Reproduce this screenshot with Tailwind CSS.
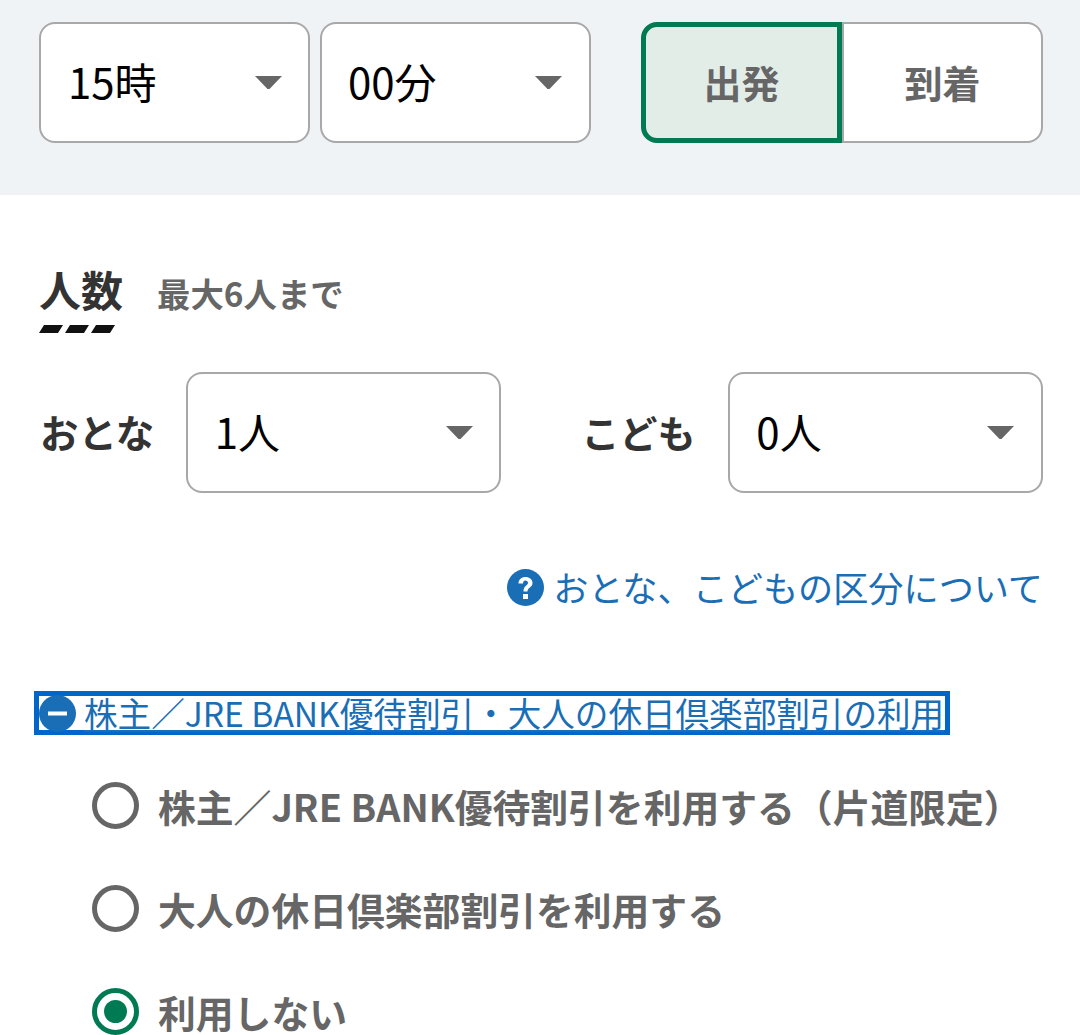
<!DOCTYPE html>
<html lang="ja">
  <head>
    <meta charset="UTF-8" />
    <script src="https://cdn.jsdelivr.net/npm/@tailwindcss/browser@4"></script>
    <title>人数</title>
  </head>
  <body class="w-[1080px] h-[1035px] overflow-hidden bg-white font-['Noto_Sans_CJK_JP','Noto_Sans',sans-serif]">
    <!-- date and time -->
    <section class="h-[195px] bg-[#eff3f6] pt-[22px] pl-[39px] pr-[37px] flex items-start">
      <div class="w-[271px] h-[121px] bg-white border-2 border-[#a8a8a8] rounded-[16px] flex items-center justify-between pl-[27px] pr-[26px]">
        <span class="text-[42px] leading-none text-black -translate-y-[2px]">15時</span>
        <svg width="27" height="13" viewBox="0 0 27 13"><path d="M0 0H27L14.5 13H12.5Z" fill="#666" /></svg>
      </div>
      <div class="ml-[10px] w-[271px] h-[121px] bg-white border-2 border-[#a8a8a8] rounded-[16px] flex items-center justify-between pl-[26px] pr-[27px]">
        <span class="text-[42px] leading-none text-black -translate-y-[2px]">00分</span>
        <svg width="27" height="13" viewBox="0 0 27 13"><path d="M0 0H27L14.5 13H12.5Z" fill="#666" /></svg>
      </div>
      <div class="ml-[50px] flex">
        <div class="w-[201px] h-[121px] bg-[#e3ede8] border-[5px] border-[#007a53] rounded-l-[16px] flex items-center justify-center text-[38px] font-bold text-[#666]"><span class="-translate-y-[1px]">出発</span></div>
        <div class="w-[201px] h-[121px] bg-white border-2 border-[#a8a8a8] rounded-r-[16px] flex items-center justify-center text-[38px] font-bold text-[#666]"><span class="-translate-y-[1px]">到着</span></div>
      </div>
    </section>

    <!-- passengers -->
    <section class="pl-[39px] pr-[37px] pt-[63px]">
      <div class="flex items-baseline h-[67px]">
        <h2 class="text-[42px] leading-[62px] font-bold text-[#333]">人数</h2>
        <span class="ml-[34px] text-[33.4px] font-bold text-[#666]">最大6人まで</span>
      </div>
      <svg class="block" width="76" height="8" viewBox="0 0 76 8"><path d="M5 0H24L19 8H0ZM31 0H50L45 8H26ZM57 0H76L71 8H52Z" fill="#111" /></svg>

      <div class="mt-[39px] flex items-center">
        <span class="w-[147px] text-[38.4px] font-bold text-[#333] translate-x-[1px] -translate-y-[1px]">おとな</span>
        <div class="w-[315px] h-[121px] border-2 border-[#a8a8a8] rounded-[16px] flex items-center justify-between pl-[27px] pr-[26px]">
          <span class="text-[42px] leading-none text-black -translate-y-[2px]">1人</span>
          <svg width="27" height="13" viewBox="0 0 27 13"><path d="M0 0H27L14.5 13H12.5Z" fill="#666" /></svg>
        </div>
        <span class="ml-[83px] w-[145px] text-[38px] font-bold text-[#333] -translate-x-[2px] -translate-y-[1px]">こども</span>
        <div class="w-[315px] h-[121px] border-2 border-[#a8a8a8] rounded-[16px] flex items-center justify-between pl-[26px] pr-[27px]">
          <span class="text-[42px] leading-none text-black -translate-y-[2px]">0人</span>
          <svg width="27" height="13" viewBox="0 0 27 13"><path d="M0 0H27L14.5 13H12.5Z" fill="#666" /></svg>
        </div>
      </div>

      <div class="mt-[68px] flex items-center justify-end gap-[9px] text-[35.15px] leading-[52px] text-[#1a6eb5]">
        <svg width="37" height="37" viewBox="0 0 37 37">
          <circle cx="18.5" cy="18.5" r="18.5" fill="#1a6eb5" />
          <path d="M11.5 14.5C11.5 10.5 14.5 8 18.5 8C22.5 8 25.5 10.5 25.5 14C25.5 18.5 20.5 18.5 20.5 22.5H16.5C16.5 16.5 21 16.5 21 14C21 12.5 20 11.5 18.5 11.5C17 11.5 16 12.7 16 14.5Z" fill="#fff" />
          <rect x="16" y="25" width="5" height="5" fill="#fff" />
        </svg>
        <span>おとな、こどもの区分について</span>
      </div>
    </section>

    <!-- discount -->
    <section class="pt-[78px]">
      <a class="ml-[34px] w-[916px] h-[44px] border-[5px] border-[#0066cc] flex items-center gap-[8px] text-[33.6px] text-[#1a6eb5] whitespace-nowrap">
        <svg class="shrink-0" width="37" height="37" viewBox="0 0 37 37">
          <circle cx="18.5" cy="18.5" r="18.5" fill="#1a6eb5" />
          <rect x="9" y="16.5" width="19" height="4" fill="#fff" />
        </svg>
        <span class="leading-[34px] underline underline-offset-[3px] decoration-2">株主／JRE BANK優待割引・大人の休日倶楽部割引の利用</span>
      </a>
      <ul class="pl-[92px] pt-[47px] flex flex-col gap-[56px] text-[37.8px] leading-[47px] font-bold text-[#666]">
        <li class="flex items-center gap-[19px]">
          <span class="shrink-0 w-[47px] h-[47px] rounded-full border-[5px] border-[#666]"></span>
          <span class="whitespace-nowrap">株主／JRE BANK優待割引を利用する（片道限定）</span>
        </li>
        <li class="flex items-center gap-[19px]">
          <span class="shrink-0 w-[47px] h-[47px] rounded-full border-[5px] border-[#666]"></span>
          <span>大人の休日倶楽部割引を利用する</span>
        </li>
        <li class="flex items-center gap-[19px]">
          <span class="shrink-0 w-[47px] h-[47px] rounded-full border-[5px] border-[#007a53] flex items-center justify-center">
            <span class="w-[23px] h-[23px] rounded-full bg-[#007a53]"></span>
          </span>
          <span>利用しない</span>
        </li>
      </ul>
    </section>
  </body>
</html>
